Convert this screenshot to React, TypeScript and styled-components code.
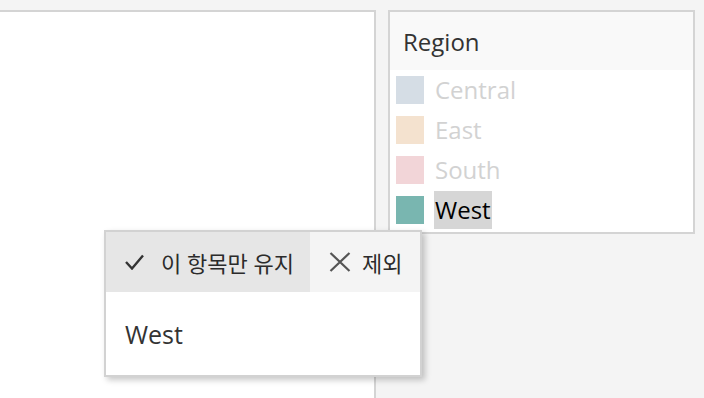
import styled, { createGlobalStyle } from "styled-components";

const GlobalStyle = createGlobalStyle`
  html, body {
    margin: 0;
    padding: 0;
    background: #f4f4f4;
    font-family: "Open Sans", "Noto Sans CJK KR", sans-serif;
    color: #333;
  }
`;

const Page = styled.div`
  position: relative;
  width: 704px;
  height: 398px;
  overflow: hidden;
  display: flex;
  align-items: flex-start;
  gap: 12px;
  padding-top: 10px;
  box-sizing: border-box;
`;

const ViewPanel = styled.div`
  flex: none;
  width: 378px;
  height: 400px;
  margin-left: -2px;
  box-sizing: border-box;
  background: #fff;
  border: 2px solid #d4d4d4;
`;

const LegendCard = styled.div`
  flex: none;
  width: 307px;
  height: 224px;
  box-sizing: border-box;
  background: #fff;
  border: 2px solid #d4d4d4;
`;

const LegendHeader = styled.div`
  height: 58px;
  display: flex;
  align-items: center;
  padding-left: 13px;
  background: #f9f9f9;
  font-size: 24px;
  color: #333;
`;

const LegendList = styled.div`
  display: flex;
  flex-direction: column;
  gap: 12px;
  padding: 6px 0 0 6px;
`;

const LegendItem = styled.div`
  display: flex;
  align-items: center;
  height: 28px;
  gap: 10px;
`;

const Swatch = styled.div<{ $color: string }>`
  width: 28px;
  height: 28px;
  background: ${(p) => p.$color};
`;

const Label = styled.span<{ $selected?: boolean }>`
  font-size: 24px;
  line-height: 38px;
  padding: 0 1px;
  color: ${(p) => (p.$selected ? "#000" : "#d2d2d2")};
  background: ${(p) => (p.$selected ? "#d6d6d6" : "transparent")};
`;

const Popup = styled.div`
  position: absolute;
  left: 104px;
  top: 230px;
  width: 318px;
  box-sizing: border-box;
  background: #fff;
  border: 2px solid #d2d2d2;
  box-shadow: 3px 3px 6px rgba(0, 0, 0, 0.22);
`;

const Actions = styled.div`
  display: flex;
  height: 60px;
`;

const ActionButton = styled.div<{ $active?: boolean; $gap: number }>`
  display: flex;
  align-items: center;
  gap: ${(p) => p.$gap}px;
  padding-left: 19px;
  box-sizing: border-box;
  width: ${(p) => (p.$active ? "204px" : "auto")};
  flex: ${(p) => (p.$active ? "none" : "1")};
  background: ${(p) => (p.$active ? "#e6e6e6" : "#f4f4f4")};
  font-size: 22px;
  color: #2b2b2b;
  white-space: nowrap;
`;

const PopupBody = styled.div`
  height: 83px;
  display: flex;
  align-items: center;
  padding-left: 19px;
  font-size: 25px;
  color: #333;
`;

const CheckIcon = () => (
  <svg width="19" height="16" viewBox="0 0 19 16">
    <path d="M1 8 L7 14.5 L18 1.5" fill="none" stroke="#333" strokeWidth="2.4" />
  </svg>
);

const CloseIcon = () => (
  <svg width="22" height="20" viewBox="0 0 22 20">
    <path d="M1.5 1 L20.5 19 M20.5 1 L1.5 19" fill="none" stroke="#555" strokeWidth="2.2" />
  </svg>
);

const regions = [
  { name: "Central", color: "#d5dde5" },
  { name: "East", color: "#f4e2cf" },
  { name: "South", color: "#f2d5d8" },
  { name: "West", color: "#79b6b0", selected: true },
];

const App = () => {
  return (
    <Page>
      <GlobalStyle />
      <ViewPanel />
      <LegendCard>
        <LegendHeader>Region</LegendHeader>
        <LegendList>
          {regions.map((r) => (
            <LegendItem key={r.name}>
              <Swatch $color={r.color} />
              <Label $selected={r.selected}>{r.name}</Label>
            </LegendItem>
          ))}
        </LegendList>
      </LegendCard>
      <Popup>
        <Actions>
          <ActionButton $active $gap={17}>
            <CheckIcon />
            이 항목만 유지
          </ActionButton>
          <ActionButton $gap={11}>
            <CloseIcon />
            제외
          </ActionButton>
        </Actions>
        <PopupBody>West</PopupBody>
      </Popup>
    </Page>
  );
};

export default App;
